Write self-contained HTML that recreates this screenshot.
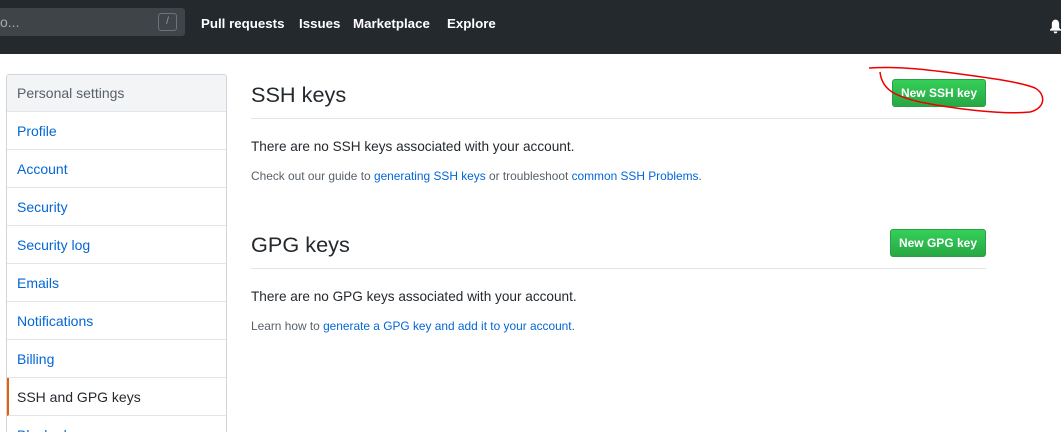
<!DOCTYPE html>
<html><head><meta charset="utf-8"><style>
*{box-sizing:border-box;margin:0;padding:0}
html,body{width:1061px;height:432px;overflow:hidden}
body{background:#fff;font-family:"Liberation Sans",sans-serif;color:#24292e;position:relative}
.hdr{position:absolute;left:0;top:0;width:1061px;height:54px;background:#24292e}
.search{position:absolute;left:0;top:8px;width:185px;height:28px;background:#3f4448;border-radius:0 3px 3px 0;color:#aaa;font-size:14px;line-height:28px}
.slash{position:absolute;left:158px;top:5px;width:19px;height:18px;border:1px solid #6a737d;border-radius:3px;color:#999;font-size:10px;line-height:16px;text-align:center}
.nav{position:absolute;top:16px;color:#fff;font-weight:bold;font-size:13.3px}
.side{position:absolute;left:6px;top:74px;width:221px;height:358px;border:1px solid #d1d5da;border-bottom:none;border-radius:3px 3px 0 0;overflow:hidden}
.side div{height:38px;border-bottom:1px solid #e1e4e8;font-size:14px;line-height:39px;padding-left:10px;color:#0366d6}
.side .h{background:#f3f4f6;color:#586069;height:37px;line-height:37px}
.side .sel{color:#24292e;border-left:2px solid #e36209;padding-left:8px}
.side .last{height:16px;border-bottom:none;overflow:hidden}
h2{position:absolute;left:251px;font-weight:normal;font-size:21.7px;color:#24292e}
.rule{position:absolute;left:251px;width:735px;height:1px;background:#e1e4e8}
.btn{position:absolute;height:28px;background:linear-gradient(#34d058,#28a745);border:1px solid #2a9f45;border-radius:3px;color:#fff;font-weight:bold;font-size:12px;line-height:26px;text-align:center}
.p{position:absolute;left:251px;font-size:13.6px}
.s{position:absolute;left:251px;font-size:11.9px;color:#586069}
a{color:#0366d6;text-decoration:none}
</style></head><body>
<div class="hdr">
<div class="search">o...<span class="slash">/</span></div>
<span class="nav" style="left:201px">Pull requests</span>
<span class="nav" style="left:299px">Issues</span>
<span class="nav" style="left:353px">Marketplace</span>
<span class="nav" style="left:447px">Explore</span>
<svg style="position:absolute;left:1050px;top:18px" width="11" height="16" viewBox="0 0 12 16"><path d="M6 1c-3 0-4 3-4 5v4l-2 2v1h12v-1l-2-2V6c0-2-1-5-4-5zM4 14h4a2 2 0 0 1-4 0z" fill="#fff"/></svg>
</div>
<div class="side">
<div class="h">Personal settings</div>
<div>Profile</div><div>Account</div><div>Security</div><div>Security log</div><div>Emails</div><div>Notifications</div><div>Billing</div>
<div class="sel">SSH and GPG keys</div><div class="last">Blocked users</div>
</div>
<h2 style="top:82px">SSH keys</h2>
<div class="rule" style="top:118px"></div>
<div class="btn" style="left:892px;top:79px;width:94px">New SSH key</div>
<div class="p" style="top:139px">There are no SSH keys associated with your account.</div>
<div class="s" style="top:169px">Check out our guide to <a>generating SSH keys</a> or troubleshoot <a>common SSH Problems</a>.</div>
<h2 style="top:232px">GPG keys</h2>
<div class="rule" style="top:268px"></div>
<div class="btn" style="left:890px;top:229px;width:96px">New GPG key</div>
<div class="p" style="top:289px">There are no GPG keys associated with your account.</div>
<div class="s" style="top:319px">Learn how to <a>generate a GPG key and add it to your account</a>.</div>
<svg style="position:absolute;left:860px;top:60px" width="201" height="60" viewBox="0 0 201 60"><path d="M9 8C40 6 70 10 100 14C130 18 160 22 175 28C186 34 186 48 170 52C140 55 90 48 60 42C35 36 22 30 20 12" fill="none" stroke="#e00" stroke-width="1.5"/></svg>
</body></html>
